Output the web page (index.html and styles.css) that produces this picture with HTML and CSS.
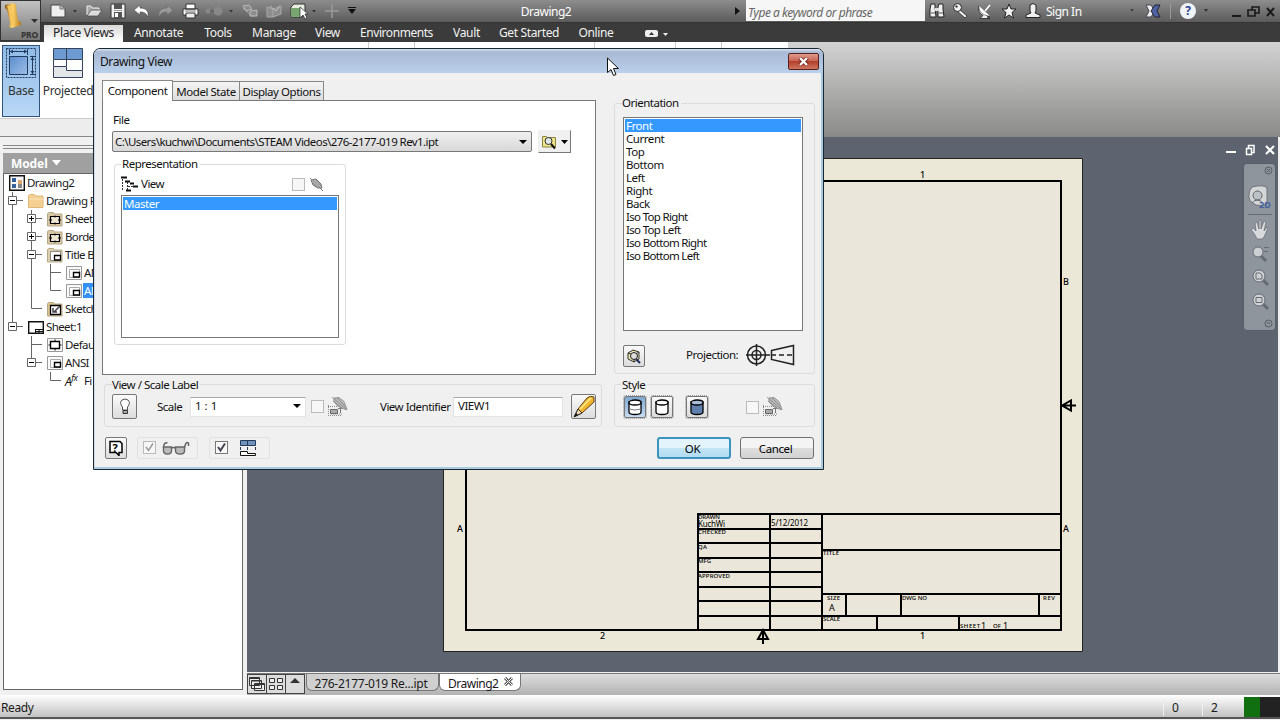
FILE: index.html
```html
<!DOCTYPE html>
<html lang="en">
<head>
    <title>Drawing2</title>
    <meta charset="UTF-8">
    <link rel="stylesheet" href="styles.css">
</head>
<body>
    <!-- shared symbols -->
    <svg class="symbols">
        <symbol id="t-line" viewBox="0 0 19 18"><path d="M8.5 0V18" stroke="#666"/></symbol>
        <symbol id="t-tee" viewBox="0 0 19 18"><path d="M8.5 0V18M8.5 8.5H19" stroke="#666"/></symbol>
        <symbol id="t-corner" viewBox="0 0 19 18"><path d="M8.5 0V8.5H19" stroke="#666" fill="none"/></symbol>
        <symbol id="t-minus" viewBox="0 0 19 18"><path d="M8.5 0V18M8.5 8.5H19" stroke="#666"/><path d="M4.500 4.500h8v8h-8z" fill="#fff" stroke="#666"/><path d="M6 8.500h5" stroke="#000"/></symbol>
        <symbol id="t-minus-end" viewBox="0 0 19 18"><path d="M8.5 0V8.5H19" stroke="#666" fill="none"/><path d="M4.500 4.500h8v8h-8z" fill="#fff" stroke="#666"/><path d="M6 8.500h5" stroke="#000"/></symbol>
        <symbol id="t-plus" viewBox="0 0 19 18"><path d="M8.5 0V18M8.5 8.5H19" stroke="#666"/><path d="M4.500 4.500h8v8h-8z" fill="#fff" stroke="#666"/><path d="M6 8.500h5M8.500 6v5" stroke="#000"/></symbol>
        <symbol id="i-folder" viewBox="0 0 16 16"><path d="M.5 14.500V2.500l1-1h5l1 1.500h7.500v11.500z" fill="#f3cf92" stroke="#dfb878"/><path d="M1 6h14" stroke="#fbe3b6"/></symbol>
        <symbol id="i-border" viewBox="0 0 16 16"><path d="M.5 15V2.500l1-1h5l1 1.500h7.500v12z" fill="#d8c7a4" stroke="#b8a888"/><path d="M3.500 5.500h9v7h-9z" fill="#efe6d2" stroke="#000" stroke-width="1.200"/><path d="M2 9h3M11 9h3M8 4.500v2M8 11.500v2" stroke="#000"/></symbol>
        <symbol id="i-tblock" viewBox="0 0 16 16"><path d="M.5 15V2.500l1-1h5l1 1.500h7.500v12z" fill="#ddcfae" stroke="#b8a888"/><path d="M3.500 4.500h10v9h-10z" fill="#fff" stroke="#888"/><path d="M7.500 8.500h6v4.500h-6z" fill="#fff" stroke="#000" stroke-width="1.300"/></symbol>
        <symbol id="i-sheetblock" viewBox="0 0 16 16"><path d="M.5 1.500h15v13H.5z" fill="#fafafa" stroke="#999"/><path d="M3.500 4.500h10v8h-10z" fill="#fff" stroke="#aaa"/><path d="M7.500 7.500h6v4.500h-6z" fill="#fff" stroke="#000" stroke-width="1.400"/></symbol>
        <symbol id="i-default" viewBox="0 0 16 16"><path d="M.5 1.500h15v13H.5z" fill="#fafafa" stroke="#999"/><path d="M3.500 4.500h9v7h-9z" fill="#fff" stroke="#000" stroke-width="1.400"/><path d="M1.500 8h2M12.500 8h2M8 2.500v2M8 11.500v2" stroke="#000"/></symbol>
        <symbol id="i-leaf" viewBox="0 0 20 20"><path d="M0 9.500h10M.5 8v11M0 18.500h14M3 17h12" stroke="#888" stroke-dasharray="1 1"/><path d="M2.500 12.500h7v4h-7z" fill="#aaa" stroke="#666"/><path d="M12.500 11v5M10 11.500h5" stroke="#777"/><path d="M6 1l5-.5 5 4 1.500 4 1.500 4-5-1-5-3-3-4z" fill="#bbb" stroke="#999"/><path d="M4 0l15 13M9 1l9 9M5 4l9 7" stroke="#808080" stroke-width=".8"/></symbol>
        <symbol id="i-views" viewBox="0 0 16 16"><path d="M.5 .5h15v5H.5z" fill="#6d93bd" stroke="#233a5c"/><path d="M7.500 0v5M.5 7v3M15.500 7v3M7.500 7v3" stroke="#233a5c"/><path d="M.5 11.500h7v2h8v2H.5z" fill="#fff" stroke="#111"/></symbol>
    </svg>

    <div class="app">
        <header class="header">
            <div class="app-button">
                <svg width="39" height="39" viewBox="0 0 39 39">
                    <defs><linearGradient id="gold" x1="0" x2="1"><stop offset="0" stop-color="#8c5a12"/><stop offset=".45" stop-color="#ffd774"/><stop offset="1" stop-color="#b87916"/></linearGradient></defs>
                    <path d="M4 4l8-2 4 2-1 2 2 14 3 1v3l-9 3-3-1 1-4-3-13-2-2z" fill="url(#gold)"/>
                    <path d="M6 5l5-1 0 3 3 14-2 4-2-3L7 7z" fill="#f7c65d"/>
                    <path d="M30 18h7l-3.500 4z" fill="#333"/>
                </svg>
                <span class="pro">PRO</span>
            </div>
            <div class="header-rows">
                <div class="titlebar">
                    <div class="quick">
                        <svg width="24" height="22"><path d="M5 5h9l5 4v8H5z" fill="#eee" stroke="#444"/><path d="M14 5v4h5" fill="#bbb" stroke="#777"/></svg>
                        <svg width="12" height="22"><path d="M3 10h4l-2 2.500z" fill="#333"/></svg>
                        <svg width="24" height="22"><path d="M5 15V6h4l1 2h7v2" fill="#aaa" stroke="#eee"/><path d="M5 16l4-6h11l-4 6z" fill="#ddd" stroke="#444" stroke-width=".7"/></svg>
                        <svg width="24" height="22"><path d="M5 4h14v14H5z" fill="#f2f2f2" stroke="#333"/><path d="M8 4h8v5H8zM8 12h8v6H8z" fill="#555"/><path d="M8 10.500h8" stroke="#999"/><path d="M9 13h3v4H9z" fill="#fff"/></svg>
                        <svg width="24" height="22"><path d="M4 10l6-5v3c6 0 9 3 8 9-2-4-4-5-8-5v3z" fill="#fff" stroke="#444" stroke-width=".6"/></svg>
                        <svg width="24" height="22"><path d="M19 10l-6-5v3c-6 0-9 3-8 9 2-4 4-5 8-5v3z" fill="#999" stroke="#666" stroke-width=".6"/></svg>
                        <svg width="24" height="22"><path d="M8 4h9v5H8zM5 9h15v6H5z" fill="#fff" stroke="#333"/><path d="M8 13h9v5H8z" fill="#eee" stroke="#333"/><path d="M7 11h11" stroke="#777"/></svg>
                        <svg width="24" height="22"><g fill="#888"><circle cx="6" cy="11" r="2.500"/><circle cx="16" cy="11" r="4.500"/></g><path d="M8 11h4" stroke="#555"/></svg>
                        <svg width="12" height="22"><path d="M3 10h4l-2 2.500z" fill="#333"/></svg>
                        <svg width="24" height="22"><path d="M5 6l6-1 3 4-6 2zM12 11l7-1v6h-7z" fill="#8d8d8d" stroke="#bbb"/><path d="M5 8l10 9" stroke="#aaa"/></svg>
                        <svg width="24" height="22"><path d="M5 7l6 2v8H5zM11 9l8-3v8l-8 3" fill="#8d8d8d" stroke="#a8a8a8"/><path d="M8 6l6 5 4-5" stroke="#c0c0c0" fill="none"/></svg>
                        <svg width="24" height="22"><path d="M5 7l3-3h11v10l-3 3H5z" fill="#e5eee0" stroke="#333"/><path d="M5 8h10v9H5z" fill="#79a571"/><path d="M14 7v11l3-3 2 4 2-1-2-4h3z" fill="#fff" stroke="#222" stroke-width=".7"/></svg>
                        <svg width="10" height="22"><path d="M2 10h4l-2 2.500z" fill="#333"/></svg>
                        <svg width="24" height="22"><path d="M12 4v14M5 11h14" stroke="#999" stroke-width="1.600"/></svg>
                        <svg width="16" height="22"><path d="M4 7.500h8" stroke="#111"/><path d="M4 9h8l-4 5z" fill="#111"/></svg>
                    </div>
                    <div class="doc-title">Drawing2</div>
                    <svg class="search-arrow" width="6" height="10"><path d="M0 1l5 4-5 4z" fill="#111"/></svg>
                    <div class="search">Type a keyword or phrase</div>
                    <div class="infocenter">
                        <svg width="24" height="22"><path d="M6 4h4v3l1 10H5V9zM14 4h4v5l1 8h-6l0-10z" fill="#f0f0f0" stroke="#222"/><path d="M10 8h4v3h-4z" fill="#ddd"/><path d="M6 13h4M14 13h4" stroke="#555"/></svg>
                        <svg width="24" height="22"><path d="M10 9l8 7-2 2-8-7z" fill="#f0f0f0" stroke="#222" stroke-width=".8"/><circle cx="8.500" cy="7.500" r="4" fill="#f0f0f0" stroke="#222"/><circle cx="7.500" cy="6.500" r="1.200" fill="#444"/></svg>
                        <svg width="24" height="22"><path d="M6 6q0 9 11 10l-3 1 3 1.500H7l3-3Q4 12 6 6z" fill="#f0f0f0" stroke="#222" stroke-width=".8"/><path d="M6 6l11 10Q6 15 6 6z" fill="#fff"/><path d="M12 11l5-6" stroke="#fff" stroke-width="1.500"/></svg>
                        <svg width="24" height="22"><path d="M12 4l2 5h5l-4 3.500 1.500 5.500-4.500-3-4.500 3L9 12.500 5 9h5z" fill="#f2f2f2" stroke="#222"/></svg>
                        <svg width="24" height="22"><path d="M9 5q3-3 6 0v6l-1 2 5 2v2.500H5V15l5-2-1-2z" fill="#f0f0f0" stroke="#222"/></svg>
                    </div>
                    <div class="signin">Sign In</div>
                    <svg class="caret" width="6" height="6"><path d="M1 1h4l-2 3z" fill="#444"/></svg>
                    <svg class="exchange" width="16" height="16"><path d="M1 2h5l4 6-4 6H1l3-6z" fill="#eee" stroke="#445"/><path d="M15 2h-5L6 8l4 6h5l-3-6z" fill="#4d63a5" stroke="#223"/></svg>
                    <span class="rule"></span>
                    <span class="help">?</span>
                    <svg class="caret-help" width="6" height="6"><path d="M1 1h4l-2 3z" fill="#333"/></svg>
                    <svg class="win" width="48" height="14" viewBox="0 0 48 14"><path d="M2 12h9" stroke="#1a1a1a" stroke-width="2"/><path d="M18 6h7v6h-7zM22 6V3h7v6h-4" fill="none" stroke="#1a1a1a" stroke-width="1.600"/><path d="M37 4l7 8M44 4l-7 8" stroke="#1a1a1a" stroke-width="2"/></svg>
                </div>
                <nav class="tabs">
                    <span class="tab active">Place Views</span>
                    <span class="tab annotate">Annotate</span>
                    <span class="tab tools">Tools</span>
                    <span class="tab manage">Manage</span>
                    <span class="tab view">View</span>
                    <span class="tab environments">Environments</span>
                    <span class="tab vault">Vault</span>
                    <span class="tab started">Get Started</span>
                    <span class="tab online">Online</span>
                    <svg class="ribbon-toggle" width="24" height="8"><rect y="0" width="13" height="7" rx="2" fill="#eee"/><path d="M4 5h5L6.500 2z" fill="#333"/><path d="M18 3h5l-2.500 3z" fill="#eee"/></svg>
                </nav>
            </div>
        </header>

        <div class="ribbon">
            <div class="panel">
                <div class="big-button selected">
                    <svg width="32" height="32"><path d="M1.500 1.500h29v29h-29z" fill="none" stroke="#223a5e" stroke-dasharray="2 1"/><defs><linearGradient id="blue" x2="1" y2="1"><stop offset="0" stop-color="#5b8fd0"/><stop offset="1" stop-color="#9dbce5"/></linearGradient></defs><path d="M4.500 9.500h18v18h-18z" fill="url(#blue)" stroke="#223a5e"/><path d="M4.500 2v6M22.500 2v6M5 4.500h17M25 9.500h5M25 27.500h5M27.500 10v17" stroke="#223a5e"/><path d="M8 2.500v4l-3-2zM19 2.500v4l3-2zM25.500 13h4l-2-3zM25.500 24h4l-2 3z" fill="#223a5e"/></svg>
                    <span>Base</span>
                </div>
                <div class="big-button">
                    <svg width="32" height="32"><path d="M1.500 1.500h29v11h-29z" fill="#6d9ad0" stroke="#34435a"/><path d="M14.500 1v11" stroke="#34435a"/><path d="M1.500 13v6M30.500 13v10M14.500 13v6" stroke="#34435a"/><path d="M1.500 19.500h13v4h16v7h-29z" fill="#e4e6ea" stroke="#34435a"/></svg>
                    <span>Projected</span>
                </div>
            </div>
        </div>

        <div class="main">
            <aside class="browser">
                <div class="grip"></div>
                <div class="browser-title">Model <svg width="9" height="6"><path d="M0 0h9L4.500 5.500z" fill="#fff"/></svg></div>
                <div class="tree">
                    <div class="row"><svg class="ico"><path d="M.7 .7h14.600v14.600H.7z" fill="#f5f5f5" stroke="#111" stroke-width="1.400"/><path d="M3 3h4v4H3zM3 9h4v4H3z" fill="#34609c"/><path d="M9 9h4v4H9z" fill="#888"/><path d="M9 5h4v4H9z" fill="#d9a86c"/></svg><span>Drawing2</span></div>
                    <div class="row"><svg class="tw"><use href="#t-minus"/></svg><svg class="ico"><use href="#i-folder"/></svg><span>Drawing Re</span></div>
                    <div class="row"><svg class="tw"><use href="#t-line"/></svg><svg class="tw"><use href="#t-plus"/></svg><svg class="ico"><use href="#i-border"/></svg><span>Sheet F</span></div>
                    <div class="row"><svg class="tw"><use href="#t-line"/></svg><svg class="tw"><use href="#t-plus"/></svg><svg class="ico"><use href="#i-border"/></svg><span>Borders</span></div>
                    <div class="row"><svg class="tw"><use href="#t-line"/></svg><svg class="tw"><use href="#t-minus"/></svg><svg class="ico"><use href="#i-tblock"/></svg><span>Title Bl</span></div>
                    <div class="row"><svg class="tw"><use href="#t-line"/></svg><svg class="tw"><use href="#t-line"/></svg><svg class="tw"><use href="#t-tee"/></svg><svg class="ico"><use href="#i-sheetblock"/></svg><span>ANSI</span></div>
                    <div class="row"><svg class="tw"><use href="#t-line"/></svg><svg class="tw"><use href="#t-line"/></svg><svg class="tw"><use href="#t-corner"/></svg><svg class="ico"><use href="#i-sheetblock"/></svg><span class="picked">ANSI</span></div>
                    <div class="row"><svg class="tw"><use href="#t-line"/></svg><svg class="tw"><use href="#t-corner"/></svg><svg class="ico"><path d="M.5 15V2.500l1-1h5l1 1.500h7.500v12z" fill="#dcc48f" stroke="#b8a888"/><path d="M3.500 4.500h10v9h-10z" fill="#fff" stroke="#000" stroke-width="1.300"/><path d="M6 7v4h4M7 11l6-6" stroke="#444" fill="none" stroke-width="1.500"/></svg><span>Sketch</span></div>
                    <div class="row"><svg class="tw"><use href="#t-minus-end"/></svg><svg class="ico"><path d="M.7 2.700h14.600v11.600H.7z" fill="#fff" stroke="#111" stroke-width="1.400"/><path d="M7 10.500h8M7 12.500h8M7.500 10v4M11 10v4" stroke="#111"/></svg><span>Sheet:1</span></div>
                    <div class="row"><svg class="tw"></svg><svg class="tw"><use href="#t-tee"/></svg><svg class="ico"><use href="#i-default"/></svg><span>Default</span></div>
                    <div class="row"><svg class="tw"></svg><svg class="tw"><use href="#t-minus-end"/></svg><svg class="ico"><use href="#i-sheetblock"/></svg><span>ANSI</span></div>
                    <div class="row"><svg class="tw"></svg><svg class="tw"></svg><svg class="tw"><use href="#t-corner"/></svg><i class="fx">A<sup>fx</sup></i><span>Fi</span></div>
                </div>
            </aside>

            <section class="workspace">
                <div class="canvas">
                    <!-- sheet coordinates are window coordinates -->
                    <svg class="sheet" viewBox="247 137 1031 535">
                        <path d="M443.500 158.500h639v493h-639z" fill="#ece8d8" stroke="#222"/>
                        <path d="M466 181h595v449H466z" fill="#eae6d9" stroke="#000" stroke-width="2"/>
                        <g fill="none" stroke="#000" stroke-width="2">
                            <path d="M698 630V514h363M770 514v116M822 514v116M698 529h124M698 543h124M698 558h124M698 572h124M698 587h124M698 601h124M698 616h363"/>
                            <path d="M822 550h239M822 594h239M846 594v22M901 594v22M1039 594v22M877 616v14M959 616v14"/>
                            <path d="M763 644v-14M763 630l-5 9h10z"/>
                            <path d="M1076 405.500h-14M1062 405.500l9-5v10z"/>
                        </g>
                        <g class="zone">
                            <text x="920" y="178">1</text><text x="920" y="639">1</text><text x="600" y="639">2</text>
                            <text x="1063" y="285">B</text><text x="1063" y="532">A</text><text x="457" y="532">A</text>
                        </g>
                        <g class="block-label">
                            <text x="698" y="519" textLength="22">DRAWN</text>
                            <text x="698" y="534" textLength="28">CHECKED</text>
                            <text x="698" y="549" textLength="9">QA</text>
                            <text x="698" y="563" textLength="13">MFG</text>
                            <text x="698" y="578" textLength="32">APPROVED</text>
                            <text x="823" y="555" textLength="16">TITLE</text>
                            <text x="827" y="600" textLength="13">SIZE</text>
                            <text x="902" y="600" textLength="25">DWG NO</text>
                            <text x="1043" y="600" textLength="12">REV</text>
                            <text x="823" y="621" textLength="17">SCALE</text>
                            <text x="960" y="628" textLength="20">SHEET</text>
                            <text x="993" y="628" textLength="8">OF</text>
                        </g>
                        <g class="block-value">
                            <text x="698" y="527" textLength="27">KuchWi</text>
                            <text x="771" y="526" textLength="37">5/12/2012</text>
                            <text class="size" x="829" y="611">A</text>
                            <text class="size" x="981" y="629">1</text>
                            <text class="size" x="1003" y="629">1</text>
                        </g>
                    </svg>
                    <svg class="mdi" width="52" height="14"><path d="M0 9h10" stroke="#fff" stroke-width="2"/><path d="M20.500 5.500h5v6h-5zM22.500 5V2.500h5.500v7h-2" fill="none" stroke="#fff" stroke-width="1.500"/><path d="M40 3l8 8M48 3l-8 8" stroke="#fff" stroke-width="2.200"/></svg>
                    <div class="navbar">
                        <svg width="32" height="167">
                            <g fill="none" stroke="#555b64"><circle cx="24.500" cy="6.500" r="3.500"/><path d="M23 5l3 3M26 5l-3 3"/><circle cx="24.500" cy="159.500" r="3.500"/><path d="M23 159h3"/></g>
                            <path d="M8 23q12-3 15 1v14q-3 5-11 3-8-4-7-10 0-5 3-8z" fill="#d3d5d6" stroke="#6c7178"/><circle cx="13.500" cy="31.500" r="4.500" fill="#bfc2c5" stroke="#5e646c"/><path d="M8 39q5-6 11 0" fill="none" stroke="#5e646c"/>
                            <text x="15" y="44" class="nav-2d">2D</text>
                            <path d="M4 50.500h24" stroke="#666c75"/>
                            <path d="M11 71l-4-6 2-1 3 3-1-8 2-1 2 7V56h2v9l3-8 2 1-2 9 3-4 1 1-4 9-2 2h-5z" fill="#d9dadb" stroke="#6d727a" stroke-width=".8"/>
                            <g fill="#cdd0d2" stroke="#666c75"><path d="M17 92l5 5M19 116l5 5M19 140l5 5" stroke-width="3"/><circle cx="14" cy="88" r="5"/><circle cx="15" cy="112" r="6"/><circle cx="15" cy="136" r="6"/><path d="M20 83.500h5M20 87.500h4M12 109h4l2 2v4h-6zM12 133.500h6v5h-6z"/></g>
                        </svg>
                    </div>
                </div>
                <div class="doc-tabs">
                    <div class="tab-tool"><svg width="18" height="17"><g fill="#eee" stroke="#333"><path d="M1.500 2.500h10v8h-10zM3.500 5.500h10v8h-10zM6.500 8.500h10v7h-10z"/></g><path d="M1.500 3.500h10M3.500 6h10M6.500 9.500h10" stroke="#333"/></svg></div>
                    <div class="tab-tool"><svg width="18" height="17"><path d="M2.500 3.500h5v4h-5zM10.500 3.500h5v4h-5zM2.500 10.500h5v4h-5zM10.500 10.500h5v4h-5z" fill="#eee" stroke="#333"/></svg></div>
                    <div class="tab-tool"><svg width="18" height="17"><path d="M4 8h10L9 3z" fill="#333"/></svg></div>
                    <div class="doc-tab">276-2177-019 Re...ipt</div>
                    <div class="doc-tab current">Drawing2<svg width="9" height="9"><path d="M1 1l7 7M8 1L1 8" stroke="#555" stroke-width="3"/><path d="M1 1l7 7M8 1L1 8" stroke="#fff"/></svg></div>
                </div>
            </section>
        </div>

        <footer class="status">
            <span class="ready">Ready</span>
            <span class="cell">0</span>
            <span class="cell">2</span>
            <span class="meter"></span>
        </footer>
    </div>

    <div class="dialog">
        <div class="dialog-title">
            <span>Drawing View</span>
            <button class="close"><svg width="11" height="9"><path d="M1.500 1l8 7M9.500 1l-8 7" stroke="#7c3028" stroke-width="4"/><path d="M2 1l7 7M9 1L2 8" stroke="#fff" stroke-width="2.200"/></svg></button>
        </div>
        <div class="dialog-body">
            <div class="upper">
                <div class="component">
                    <div class="dlg-tabs">
                        <span class="dlg-tab on">Component</span>
                        <span class="dlg-tab state">Model State</span>
                        <span class="dlg-tab options">Display Options</span>
                    </div>
                    <div class="page">
                        <div class="label">File</div>
                        <div class="file-row">
                            <div class="combo"><span>C:\Users\kuchwi\Documents\STEAM Videos\276-2177-019 Rev1.ipt</span><svg width="8" height="4"><path d="M0 0h8L4 4z" fill="#000"/></svg></div>
                            <div class="browse"><svg width="28" height="18"><path d="M1.500 14V3.500h4l1 1h8V14z" fill="#eee48c" stroke="#8a8440"/><circle cx="7.500" cy="8" r="3.500" fill="#dfe6e6" stroke="#333"/><path d="M10 11l4 4.500" stroke="#111" stroke-width="2"/><path d="M20 7h7l-3.500 4z" fill="#000"/></svg></div>
                        </div>
                        <div class="group representation">
                            <span class="legend">Representation</span>
                            <div class="view-row">
                                <svg width="17" height="16"><path d="M0 1.500h6M4 5.500h5M5 14.500h5M9 7.500h4M12 10.500h5" stroke="#111" stroke-width="2"/><path d="M1.500 3v11M6.500 6v8M7 10.500h5" stroke="#333" stroke-dasharray="2 1"/></svg>
                                <span>View</span>
                                <i class="box"></i>
                                <svg width="15" height="15"><path d="M1 1l13 13" stroke="#777"/><path d="M2 3l5-1 5 5 1 4-4 0-5-3z" fill="#bbb" stroke="#777"/><path d="M4 3l8 9M7 3l5 6M3 5l6 6" stroke="#777" stroke-width=".8"/></svg>
                            </div>
                            <div class="list"><div class="item picked">Master</div></div>
                        </div>
                    </div>
                </div>
                <div class="group orientation">
                    <span class="legend">Orientation</span>
                    <div class="list">
                        <div class="item picked">Front</div>
                        <div class="item">Current</div>
                        <div class="item">Top</div>
                        <div class="item">Bottom</div>
                        <div class="item">Left</div>
                        <div class="item">Right</div>
                        <div class="item">Back</div>
                        <div class="item">Iso Top Right</div>
                        <div class="item">Iso Top Left</div>
                        <div class="item">Iso Bottom Right</div>
                        <div class="item">Iso Bottom Left</div>
                    </div>
                    <div class="projection">
                        <div class="tool"><svg width="16" height="16"><path d="M2 5l5-3 6 2v7l-5 3-6-3zM2 5l6 2 5-3M8 7v7" fill="#e8e4a8" stroke="#333"/><circle cx="8" cy="8" r="3.500" fill="#ddd" stroke="#222"/><path d="M10 11l4 4" stroke="#1c2c5c" stroke-width="2"/></svg></div>
                        <span>Projection:</span>
                        <svg width="50" height="22"><g fill="none" stroke="#222" stroke-width="1.500"><circle cx="10.500" cy="11" r="9"/><circle cx="10.500" cy="11" r="4.500"/><path d="M10.500 0v22M0 11h24"/><path d="M25.500 6.500l22-5v19l-22-5z"/><path d="M25 11h24" stroke-dasharray="5 3"/></g></svg>
                    </div>
                </div>
            </div>
            <div class="middle">
                <div class="group scale-label">
                    <span class="legend">View / Scale Label</span>
                    <div class="tool large"><svg width="12" height="18"><path d="M3.500 12V9Q0 5 3 2q3-2 6 0 3 3-.5 7v3z" fill="#fff" stroke="#555"/><path d="M4 12.500h4.500v3H4z" fill="#aaa" stroke="#333"/></svg></div>
                    <span class="scale-text">Scale</span>
                    <div class="input scale"><span>1 : 1</span><svg width="8" height="4"><path d="M0 0h8L4 4z" fill="#000"/></svg></div>
                    <i class="box"></i>
                    <svg class="leaf" width="20" height="20"><use href="#i-leaf"/></svg>
                    <span class="ident-text">View Identifier</span>
                    <div class="input ident">VIEW1</div>
                    <div class="tool large"><svg width="22" height="22"><path d="M1 21l4-8L14 2q3-3 7-1v5L9 17z" fill="#efb52e" stroke="#5b3c10"/><path d="M5 13l4 4L1.500 20.500z" fill="#f0d5b0" stroke="#333"/><path d="M1 21l2-4 2 2z" fill="#111"/><path d="M7 13L18 2" stroke="#ffe27a" stroke-width="2"/></svg></div>
                </div>
                <div class="group style">
                    <span class="legend">Style</span>
                    <div class="tool on"><svg width="18" height="18"><path d="M3 4v10q0 2.500 6 2.500t6-2.500V4z" fill="#fff" stroke="#000" stroke-width="1.300"/><ellipse cx="9" cy="4.500" rx="6" ry="2.500" fill="#fff" stroke="#000" stroke-width="1.300"/><path d="M3 11q6 2 12 0" stroke="#777" fill="none"/></svg></div>
                    <div class="tool"><svg width="18" height="18"><path d="M3 4v10q0 2.500 6 2.500t6-2.500V4z" fill="#fff" stroke="#000" stroke-width="1.300"/><ellipse cx="9" cy="4.500" rx="6" ry="2.500" fill="#fff" stroke="#000" stroke-width="1.300"/></svg></div>
                    <div class="tool shaded"><svg width="18" height="18"><path d="M3 4v10q0 2.500 6 2.500t6-2.500V4z" fill="#5f80ae" stroke="#000" stroke-width="1.300"/><ellipse cx="9" cy="4.500" rx="6" ry="2.500" fill="#a9bedb" stroke="#000" stroke-width="1.300"/></svg></div>
                    <i class="box"></i>
                    <svg class="leaf" width="20" height="20"><use href="#i-leaf"/></svg>
                </div>
            </div>
            <div class="bottom">
                <div class="tool"><svg width="16" height="16"><path d="M2 1.500h10l2 2v9h-3v3l-3-3H2z" fill="#fff" stroke="#000" stroke-width="1.500"/><text x="4.500" y="11.500" class="q">?</text></svg></div>
                <div class="option glasses">
                    <i class="box"><svg width="11" height="11"><path d="M2 5l2.500 3.500L9 1.500" fill="none" stroke="#999" stroke-width="1.500"/></svg></i>
                    <svg width="28" height="14"><path d="M1.500 6h8v4q0 3-4 3-4 0-4-3zM13.500 6h9v4q0 3-4 3-5 0-5-3z" fill="#bbb" stroke="#666" stroke-width="1.400"/><path d="M1.500 7q0-6 4-5M9 7.500q2-2 5 0M22.500 7q1-7 4-5v3" fill="none" stroke="#666" stroke-width="1.500"/></svg>
                </div>
                <div class="option raster">
                    <i class="box ticked"><svg width="11" height="11"><path d="M2 5l2.500 3.500L9 1.500" fill="none" stroke="#445" stroke-width="2"/></svg></i>
                    <svg width="16" height="16"><use href="#i-views"/></svg>
                </div>
                <button class="btn ok">OK</button>
                <button class="btn">Cancel</button>
            </div>
        </div>
        <svg class="pointer" width="14" height="20"><path d="M1.500 1v14.500l3.500-3 2.500 6 2.500-1-2.500-6h5z" fill="#fff" stroke="#111"/></svg>
    </div>
</body>
</html>
```
FILE: styles.css
```css
* {
    box-sizing: border-box;
}
body {
    margin: 0;
    width: 1280px;
    height: 720px;
    overflow: hidden;
    font-family: "Noto Sans", "Open Sans", sans-serif;
    font-size: 12px;
    color: #1a1a1a;
}
svg {
    display: block;
    flex: none;
}
.symbols {
    position: absolute;
    width: 0;
    height: 0;
}
.app {
    display: flex;
    flex-direction: column;
    height: 720px;
    background: #f0f0f0;
}

/* title bar and ribbon tabs */
.header {
    display: flex;
    height: 42px;
    background: #3b3b3b;
}
.app-button {
    display: grid;
    width: 41px;
    height: 41px;
    border: 1px solid #333;
    background: linear-gradient(#c2c2c2, #777);
}
.app-button > * {
    grid-area: 1 / 1;
}
.pro {
    align-self: end;
    justify-self: end;
    padding: 0 2px 0 0;
    font-size: 8.5px;
    line-height: 10px;
    font-weight: bold;
    letter-spacing: -0.2px;
    color: #333;
}
.header-rows {
    flex: 1;
}
.titlebar {
    display: flex;
    align-items: center;
    height: 23px;
    background: linear-gradient(#8d8d8d, #5b5b5b);
    border-bottom: 1px solid #333;
    color: #fff;
}
.quick {
    display: flex;
    margin-left: 5px;
    width: 314px;
}
.doc-title {
    width: 371px;
    padding: 1px 0 0 1px;
    text-align: center;
    letter-spacing: -0.5px;
}
.search-arrow {
    margin-left: 4px;
}
.search {
    width: 179px;
    height: 21px;
    margin: 0 0 1px 5px;
    padding: 4px 2px 0;
    line-height: 18px;
    background: #f6f6f6;
    color: #666;
    font-style: italic;
    letter-spacing: -0.47px;
    white-space: nowrap;
}
.infocenter {
    display: flex;
    width: 121px;
}
.signin {
    width: 83px;
    padding-top: 1px;
    letter-spacing: -0.5px;
}
.exchange {
    margin-left: 10px;
}
.rule {
    width: 1px;
    height: 16px;
    margin: 0 9px;
    background: #999;
}
.help {
    width: 16px;
    height: 16px;
    border-radius: 50%;
    background: #f0f3f8;
    color: #2c4590;
    font-weight: bold;
    line-height: 16px;
    text-align: center;
}
.caret-help {
    margin: 0 21px 0 7px;
}
.tabs {
    display: flex;
    height: 19px;
    padding-left: 3px;
    color: #f2f2f2;
    line-height: 20px;
}
.tab {
    text-align: center;
    white-space: nowrap;
    letter-spacing: -0.35px;
}
.tab.active {
    width: 79px;
    margin-top: 2px;
    height: 17px;
    line-height: 16px;
    background: linear-gradient(#d8d8d8, #fff);
    color: #222;
}
.annotate { width: 71px; }
.tools { width: 48px; }
.manage { width: 64px; }
.view { width: 43px; }
.environments {
    width: 95px;
    letter-spacing: -0.45px;
}
.vault { width: 45px; }
.started { width: 80px; }
.online { width: 54px; }
.ribbon-toggle {
    margin: 7px 0 0 22px;
}

.ribbon {
    height: 95px;
    background: linear-gradient(#d2d2d2, #8b8b89);
    border-bottom: 1px solid #888;
}
.panel {
    display: flex;
    gap: 1px;
    width: 788px;
    height: 94px;
    padding: 3px 2px;
    background:
        linear-gradient(#ccc, #ccc) 368px 0 / 1px 76px no-repeat,
        linear-gradient(#ccc, #ccc) 414px 0 / 1px 76px no-repeat,
        linear-gradient(#ccc, #ccc) 594px 0 / 1px 76px no-repeat,
        linear-gradient(#ccc, #ccc) 675px 0 / 1px 76px no-repeat,
        linear-gradient(#ccc, #ccc) 721px 0 / 1px 76px no-repeat,
        linear-gradient(#fff 76px, #ccc 76px, #ccc 77px, #ededed 77px);
}
.big-button {
    display: flex;
    flex-direction: column;
    align-items: center;
    width: 54px;
    height: 72px;
    padding-top: 2px;
    letter-spacing: -0.3px;
    color: #333;
}
.big-button span {
    margin-top: 3px;
}
.big-button.selected {
    width: 38px;
    border: 1px solid #33527c;
    background: linear-gradient(#8fbbe6, #b9d8f5);
    padding-top: 1px;
}

/* model browser */
.main {
    display: flex;
    height: 558px;
}
.browser {
    width: 247px;
    padding: 8px 4px 5px 3px;
}
.grip {
    height: 4px;
    border-top: 1px solid #888;
    border-bottom: 1px solid #888;
}
.browser-title {
    display: flex;
    align-items: center;
    gap: 4px;
    height: 20px;
    margin-top: 4px;
    padding-left: 8px;
    background: #a0a0a0;
    color: #fff;
    font-weight: bold;
    letter-spacing: -0.1px;
}
.tree {
    height: 517px;
    border: 1px solid #666;
    background: #fff;
    overflow: hidden;
}
.row {
    display: flex;
    align-items: center;
    height: 18px;
    white-space: nowrap;
    font-size: 11.5px;
    letter-spacing: -0.6px;
}
.tw {
    width: 19px;
    height: 18px;
}
.ico {
    width: 16px;
    height: 16px;
    margin: 0 1px 0 5px;
}
.row .picked {
    background: #3390f5;
    color: #fff;
}
.row span {
    margin-bottom: 1px;
    padding: 0 1px;
    line-height: 15px;
}
.fx {
    width: 18px;
    margin-left: 4px;
    font-size: 12px;
}
.fx sup {
    font-size: 9px;
    line-height: 8px;
}

/* drawing area */
.workspace {
    width: 1033px;
    background: #f0f0f0;
}
.canvas {
    position: relative;
    width: 1031px;
    height: 535px;
    background: #5d6470;
}
.sheet {
    width: 1031px;
    height: 535px;
}
.zone text {
    font-size: 9px;
    font-weight: 500;
}
.block-label text {
    font-size: 6px;
    font-weight: 500;
}
.block-value text {
    font-size: 8px;
}
.block-value .size {
    font-size: 9px;
}
.mdi {
    position: absolute;
    top: 6px;
    right: 0;
}
.navbar {
    position: absolute;
    top: 26px;
    right: 2px;
    width: 33px;
    height: 168px;
    border: 1px solid #585e68;
    border-radius: 4px;
    background: #8f959c;
}
.nav-2d {
    font-size: 9px;
    font-weight: bold;
    fill: #4863a0;
}
.doc-tabs {
    display: flex;
    height: 22px;
    margin-top: 1px;
    border-top: 1px solid #777;
    background: linear-gradient(#dedede, #b2b2b2);
}
.tab-tool {
    width: 20px;
    height: 20px;
    margin-left: -1px;
    border: 1px solid #444;
    background: #dcdcdc;
}
.tab-tool:first-child {
    margin-left: 0;
}
.doc-tab {
    width: 133px;
    height: 17px;
    margin-left: 1px;
    padding-right: 3px;
    border: 1px solid #777;
    border-top: 0;
    border-radius: 0 0 6px 6px;
    background: #d0d0d0;
    text-align: center;
    line-height: 20px;
    letter-spacing: -0.25px;
}
.doc-tab.current {
    display: flex;
    gap: 6px;
    width: 82px;
    margin-left: 0;
    padding: 0 0 0 8px;
    background: #fff;
    letter-spacing: -0.5px;
}
.doc-tab svg {
    margin-top: 3px;
}
.status {
    display: flex;
    align-items: center;
    height: 24px;
    padding-top: 2px;
    border-bottom: 2px solid #555;
    background: linear-gradient(#fff, #c2c2c2);
}
.ready {
    width: 1163px;
    padding-left: 1px;
    letter-spacing: -0.4px;
}
.cell {
    width: 39px;
    padding-left: 8px;
    border-left: 1px solid #eee;
}
.meter {
    width: 36px;
    height: 20px;
    margin-left: 3px;
    background: linear-gradient(90deg, #107010 16px, #222 16px);
}

/* Drawing View dialog */
.dialog {
    position: absolute;
    left: 93px;
    top: 48px;
    width: 731px;
    height: 422px;
    border: 1px solid #1a2733;
    border-radius: 7px 7px 0 0;
    background: #f0f0f0;
    box-shadow: inset -2px -2px 0 #a9cbe0, inset 1px 0 0 #cfdbe8;
    font-size: 11.5px;
    letter-spacing: -0.5px;
    color: #111;
}
.dialog-title {
    display: flex;
    justify-content: space-between;
    height: 24px;
    padding: 3px 4px 0 6px;
    border-radius: 6px 6px 0 0;
    background: linear-gradient(#dbe5f2, #a9b9d4 3px, #b9cfea);
    line-height: 20px;
    font-size: 12px;
    letter-spacing: -0.4px;
}
.close {
    display: flex;
    align-items: center;
    justify-content: center;
    width: 31px;
    height: 17px;
    margin-top: 1px;
    padding: 0;
    border: 1px solid #56201c;
    border-radius: 2px;
    background: linear-gradient(#dd9c90, #c9604f 50%, #b33f2c 50%, #cf7560);
}
.dialog-body {
    padding: 6px 8px 0;
}
.upper {
    display: flex;
    height: 296px;
}
.component {
    width: 494px;
}
.dlg-tabs {
    display: flex;
    align-items: flex-end;
    height: 21px;
}
.dlg-tab {
    height: 19px;
    border: 1px solid #888;
    border-left: 0;
    border-bottom: 0;
    background: linear-gradient(#f3f3f3, #dedede);
    text-align: center;
    line-height: 20px;
    letter-spacing: -0.46px;
}
.dlg-tab.on {
    width: 71px;
    height: 21px;
    margin-bottom: -1px;
    border-left: 1px solid #888;
    background: #fff;
    line-height: 19px;
    z-index: 1;
}
.state {
    width: 67px;
}
.options {
    width: 84px;
}
.page {
    height: 275px;
    padding: 10px 9px;
    border: 1px solid #777;
    background: #fff;
}
.label {
    height: 19px;
    padding-left: 1px;
    line-height: 18px;
}
.file-row {
    display: flex;
    align-items: center;
    gap: 6px;
    height: 23px;
}
.combo {
    display: flex;
    align-items: center;
    justify-content: space-between;
    width: 420px;
    height: 21px;
    padding: 0 4px 0 2px;
    border: 1px solid #777;
    border-radius: 2px;
    background: linear-gradient(#f0f0f0, #d8d8d8);
    letter-spacing: -0.57px;
}
.browse {
    width: 33px;
    height: 23px;
    padding: 2px;
    border: 1px solid #eee;
    border-right: 1px solid #777;
    border-bottom: 1px solid #777;
    background: #f0f0f0;
}
.group {
    border: 1px solid #dcdcdc;
    border-radius: 3px;
}
.legend {
    display: block;
    height: 16px;
    margin-top: -8px;
    padding: 0 2px 0 0;
    line-height: 16px;
    background: #f0f0f0;
    width: max-content;
    letter-spacing: -0.5px;
}
.representation {
    width: 232px;
    height: 181px;
    margin: 11px 0 0 2px;
    padding-left: 6px;
}
.representation .legend {
    margin-top: -9px;
    padding-left: 1px;
    background: #fff;
}
.view-row {
    display: flex;
    align-items: center;
    height: 22px;
    margin-top: 1px;
}
.view-row span {
    width: 151px;
    margin: 0 0 1px 3px;
}
.view-row .box {
    margin-right: 4px;
}
.list {
    border: 1px solid #777;
    background: #fff;
    padding: 1px;
}
.representation .list {
    width: 218px;
    height: 143px;
}
.item {
    height: 13px;
    padding-left: 1px;
    line-height: 13px;
    letter-spacing: -0.68px;
}
.item:nth-child(-n+7) {
    letter-spacing: -0.45px;
}
.item.picked {
    background: #3399ff;
    color: #fff;
}
.box {
    display: block;
    flex: none;
    width: 13px;
    height: 13px;
    border: 1px solid #bbb;
    background: #f7f7f7;
}
.box.ticked {
    border-color: #777;
}
.orientation {
    width: 201px;
    height: 271px;
    margin: 24px 0 0 18px;
    padding-left: 8px;
}
.orientation .legend, .style .legend {
    margin-left: -1px;
}
.orientation .legend {
    margin-top: -9px;
}
.orientation .list {
    width: 180px;
    height: 214px;
    margin-top: 6px;
}
.projection {
    display: flex;
    align-items: center;
    height: 22px;
    margin-top: 14px;
}
.projection span {
    width: 60px;
    margin: 0 0 4px 41px;
}
.projection > svg {
    margin-bottom: 2px;
}
.tool {
    display: flex;
    align-items: center;
    justify-content: center;
    flex: none;
    width: 22px;
    height: 22px;
    border: 1px solid #777;
    border-radius: 2px;
    background: linear-gradient(#fafafa, #dcdcdc);
}
.tool.large {
    width: 25px;
    height: 25px;
}
.tool.on {
    background: linear-gradient(#7ea7cf, #c5dcf2);
}
.middle {
    display: flex;
    gap: 12px;
    margin: 9px 0 0 2px;
}
.middle .group {
    display: flex;
    align-items: center;
    flex-wrap: wrap;
    height: 43px;
}
.scale-label {
    width: 498px;
    padding-left: 7px;
    align-content: flex-start;
}
.scale-label .legend {
    margin-right: 380px;
}
.scale-label > :not(.legend) {
    margin-top: 1px;
}
.scale-text {
    width: 33px;
    margin-left: 20px;
}
.input {
    display: flex;
    align-items: center;
    justify-content: space-between;
    height: 20px;
    padding: 0 4px 2px;
    border: 1px solid #e3e3e3;
    border-top-color: #aaa;
    background: #fff;
}
.scale {
    width: 116px;
    margin-right: 5px;
    letter-spacing: 0;
}
.leaf {
    margin-left: 4px;
}
.ident-text {
    width: 73px;
    margin-left: 32px;
    letter-spacing: -0.5px;
}
.ident {
    width: 110px;
    margin-right: 8px;
}
.style {
    width: 201px;
    padding-left: 9px;
    align-content: flex-start;
}
.style .legend {
    margin-left: -2px;
    margin-right: 150px;
}
.style > :not(.legend) {
    margin-top: 3px;
}
.style .tool {
    margin-right: 5px;
    outline: 1px dotted #999;
    outline-offset: 0;
}
.style .tool.shaded {
    margin: 3px 38px 0 8px;
}
.bottom {
    display: flex;
    align-items: center;
    height: 22px;
    margin: 10px 0 0 3px;
}
.option {
    display: flex;
    align-items: center;
    height: 22px;
    gap: 6px;
    padding: 0 0 1px 5px;
    border: 1px solid #e2e2e2;
    border-radius: 2px;
}
.glasses {
    width: 61px;
    margin-left: 10px;
}
.raster {
    width: 61px;
    margin-left: 11px;
    gap: 12px;
}
.q {
    font-size: 11px;
    font-weight: bold;
}
.btn {
    width: 74px;
    height: 22px;
    margin-left: 9px;
    padding: 0 3px 0 0;
    border: 1px solid #707070;
    border-radius: 3px;
    background: linear-gradient(#f4f4f4 50%, #dedede 50%, #d2d2d2);
    font: inherit;
    letter-spacing: -0.4px;
}
.btn.ok {
    margin-left: auto;
    border: 2px solid #3c93bd;
    background: linear-gradient(#e4f4fc 50%, #c4e5f6 50%, #b0dcf3);
}
.bottom .btn:last-child {
    margin-right: 1px;
}
.pointer {
    position: absolute;
    left: 512px;
    top: 8px;
}
```
